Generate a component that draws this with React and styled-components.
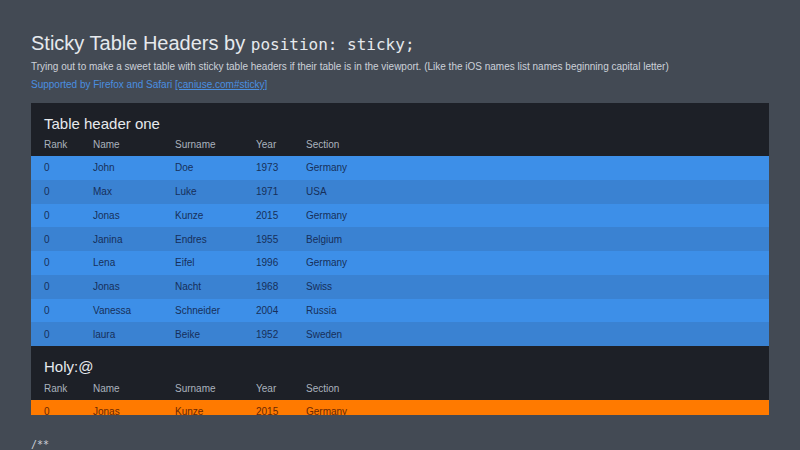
import React from 'react';
import styled, { createGlobalStyle } from 'styled-components';

const GlobalStyle = createGlobalStyle`
    html, body {
        margin: 0;
        padding: 0;
        background: #434a54;
        font-family: "Liberation Sans", Arial, sans-serif;
    }
`;

const Page = styled.div`
    padding: 0 31px;
    height: 450px;
    overflow: hidden;
    box-sizing: border-box;
`;

const Title = styled.h1`
    margin: 0;
    padding-top: 30px;
    font-size: 20px;
    font-weight: normal;
    color: #e6e9ed;
    line-height: 26px;

    & > code {
        font-family: "DejaVu Sans Mono", monospace;
        font-size: 16px;
    }
`;

const Intro = styled.p`
    margin: 2px 0 0;
    font-size: 10px;
    line-height: 13px;
    color: #ccd1d9;
`;

const Support = styled.p`
    margin: 5px 0 0;
    font-size: 10px;
    line-height: 13px;
    color: #4a8fe0;

    & > a {
        color: #4a8fe0;
        text-decoration: underline;
    }
`;

const Scroller = styled.div`
    margin-top: 12px;
    height: 312px;
    overflow: hidden;
`;

const Table = styled.table`
    width: 100%;
    table-layout: fixed;
    border-collapse: collapse;
    font-size: 10px;
`;

const Head = styled.thead`
    background: #1d2027;
`;

const Caption = styled.th`
    text-align: left;
    font-weight: normal;
    font-size: 15px;
    color: #e6e9ed;
    padding: 11px 13px 0;
    height: 19px;
`;

const ColHead = styled.th`
    text-align: left;
    font-weight: normal;
    color: #aab2bd;
    padding: 0 13px;
    height: ${p => p.$tall ? 24 : 23}px;
`;

const Row = styled.tr`
    background: ${p => p.$hot ? '#ff7a00' : p.$odd ? '#3a82d2' : '#3d8fe8'};
`;

const Cell = styled.td`
    padding: 0 13px;
    height: 23.75px;
    color: ${p => p.$hot ? '#6a2805' : '#172f5a'};
`;

const cols = [
    { label: 'Rank', w: 49 },
    { label: 'Name', w: 82 },
    { label: 'Surname', w: 81 },
    { label: 'Year', w: 50 },
    { label: 'Section' },
];

const people = [
    ['0', 'John', 'Doe', '1973', 'Germany'],
    ['0', 'Max', 'Luke', '1971', 'USA'],
    ['0', 'Jonas', 'Kunze', '2015', 'Germany'],
    ['0', 'Janina', 'Endres', '1955', 'Belgium'],
    ['0', 'Lena', 'Eifel', '1996', 'Germany'],
    ['0', 'Jonas', 'Nacht', '1968', 'Swiss'],
    ['0', 'Vanessa', 'Schneider', '2004', 'Russia'],
    ['0', 'laura', 'Beike', '1952', 'Sweden'],
];

const holy = [
    ['0', 'Jonas', 'Kunze', '2015', 'Germany'],
    ['0', 'Max', 'Luke', '1971', 'USA'],
];

const Code = styled.pre`
    margin: 24px 0 0;
    font-family: "DejaVu Sans Mono", monospace;
    font-size: 10px;
    line-height: 12px;
    color: #ccd1d9;
`;

const StickyTable = ({ title, rows, hot }) => (
    <Table>
        <colgroup>
            {cols.map(c => (
                <col key={c.label} style={c.w ? { width: c.w } : undefined} />
            ))}
        </colgroup>
        <Head>
            <tr>
                <Caption colSpan={5}>{title}</Caption>
            </tr>
            <tr>
                {cols.map(c => (
                    <ColHead key={c.label} $tall={hot}>{c.label}</ColHead>
                ))}
            </tr>
        </Head>
        <tbody>
            {rows.map((r, i) => (
                <Row key={i} $odd={i % 2 === 1} $hot={hot}>
                    {r.map((v, j) => (
                        <Cell key={j} $hot={hot}>{v}</Cell>
                    ))}
                </Row>
            ))}
        </tbody>
    </Table>
);

const App = () => {
    return (
        <>
            <GlobalStyle />
            <Page>
                <Title>Sticky Table Headers by <code>position: sticky;</code></Title>
                <Intro>
                    Trying out to make a sweet table with sticky table headers if their table is in the viewport. (Like the iOS names list names beginning capital letter)
                </Intro>
                <Support>
                    Supported by Firefox and Safari <a href="#sticky">[caniuse.com#sticky]</a>
                </Support>
                <Scroller>
                    <StickyTable title="Table header one" rows={people} />
                    <StickyTable title="Holy:@" rows={holy} hot />
                </Scroller>
                <Code>{'/**\n * Sticky Table Headers\n */'}</Code>
            </Page>
        </>
    );
};

export default App;
